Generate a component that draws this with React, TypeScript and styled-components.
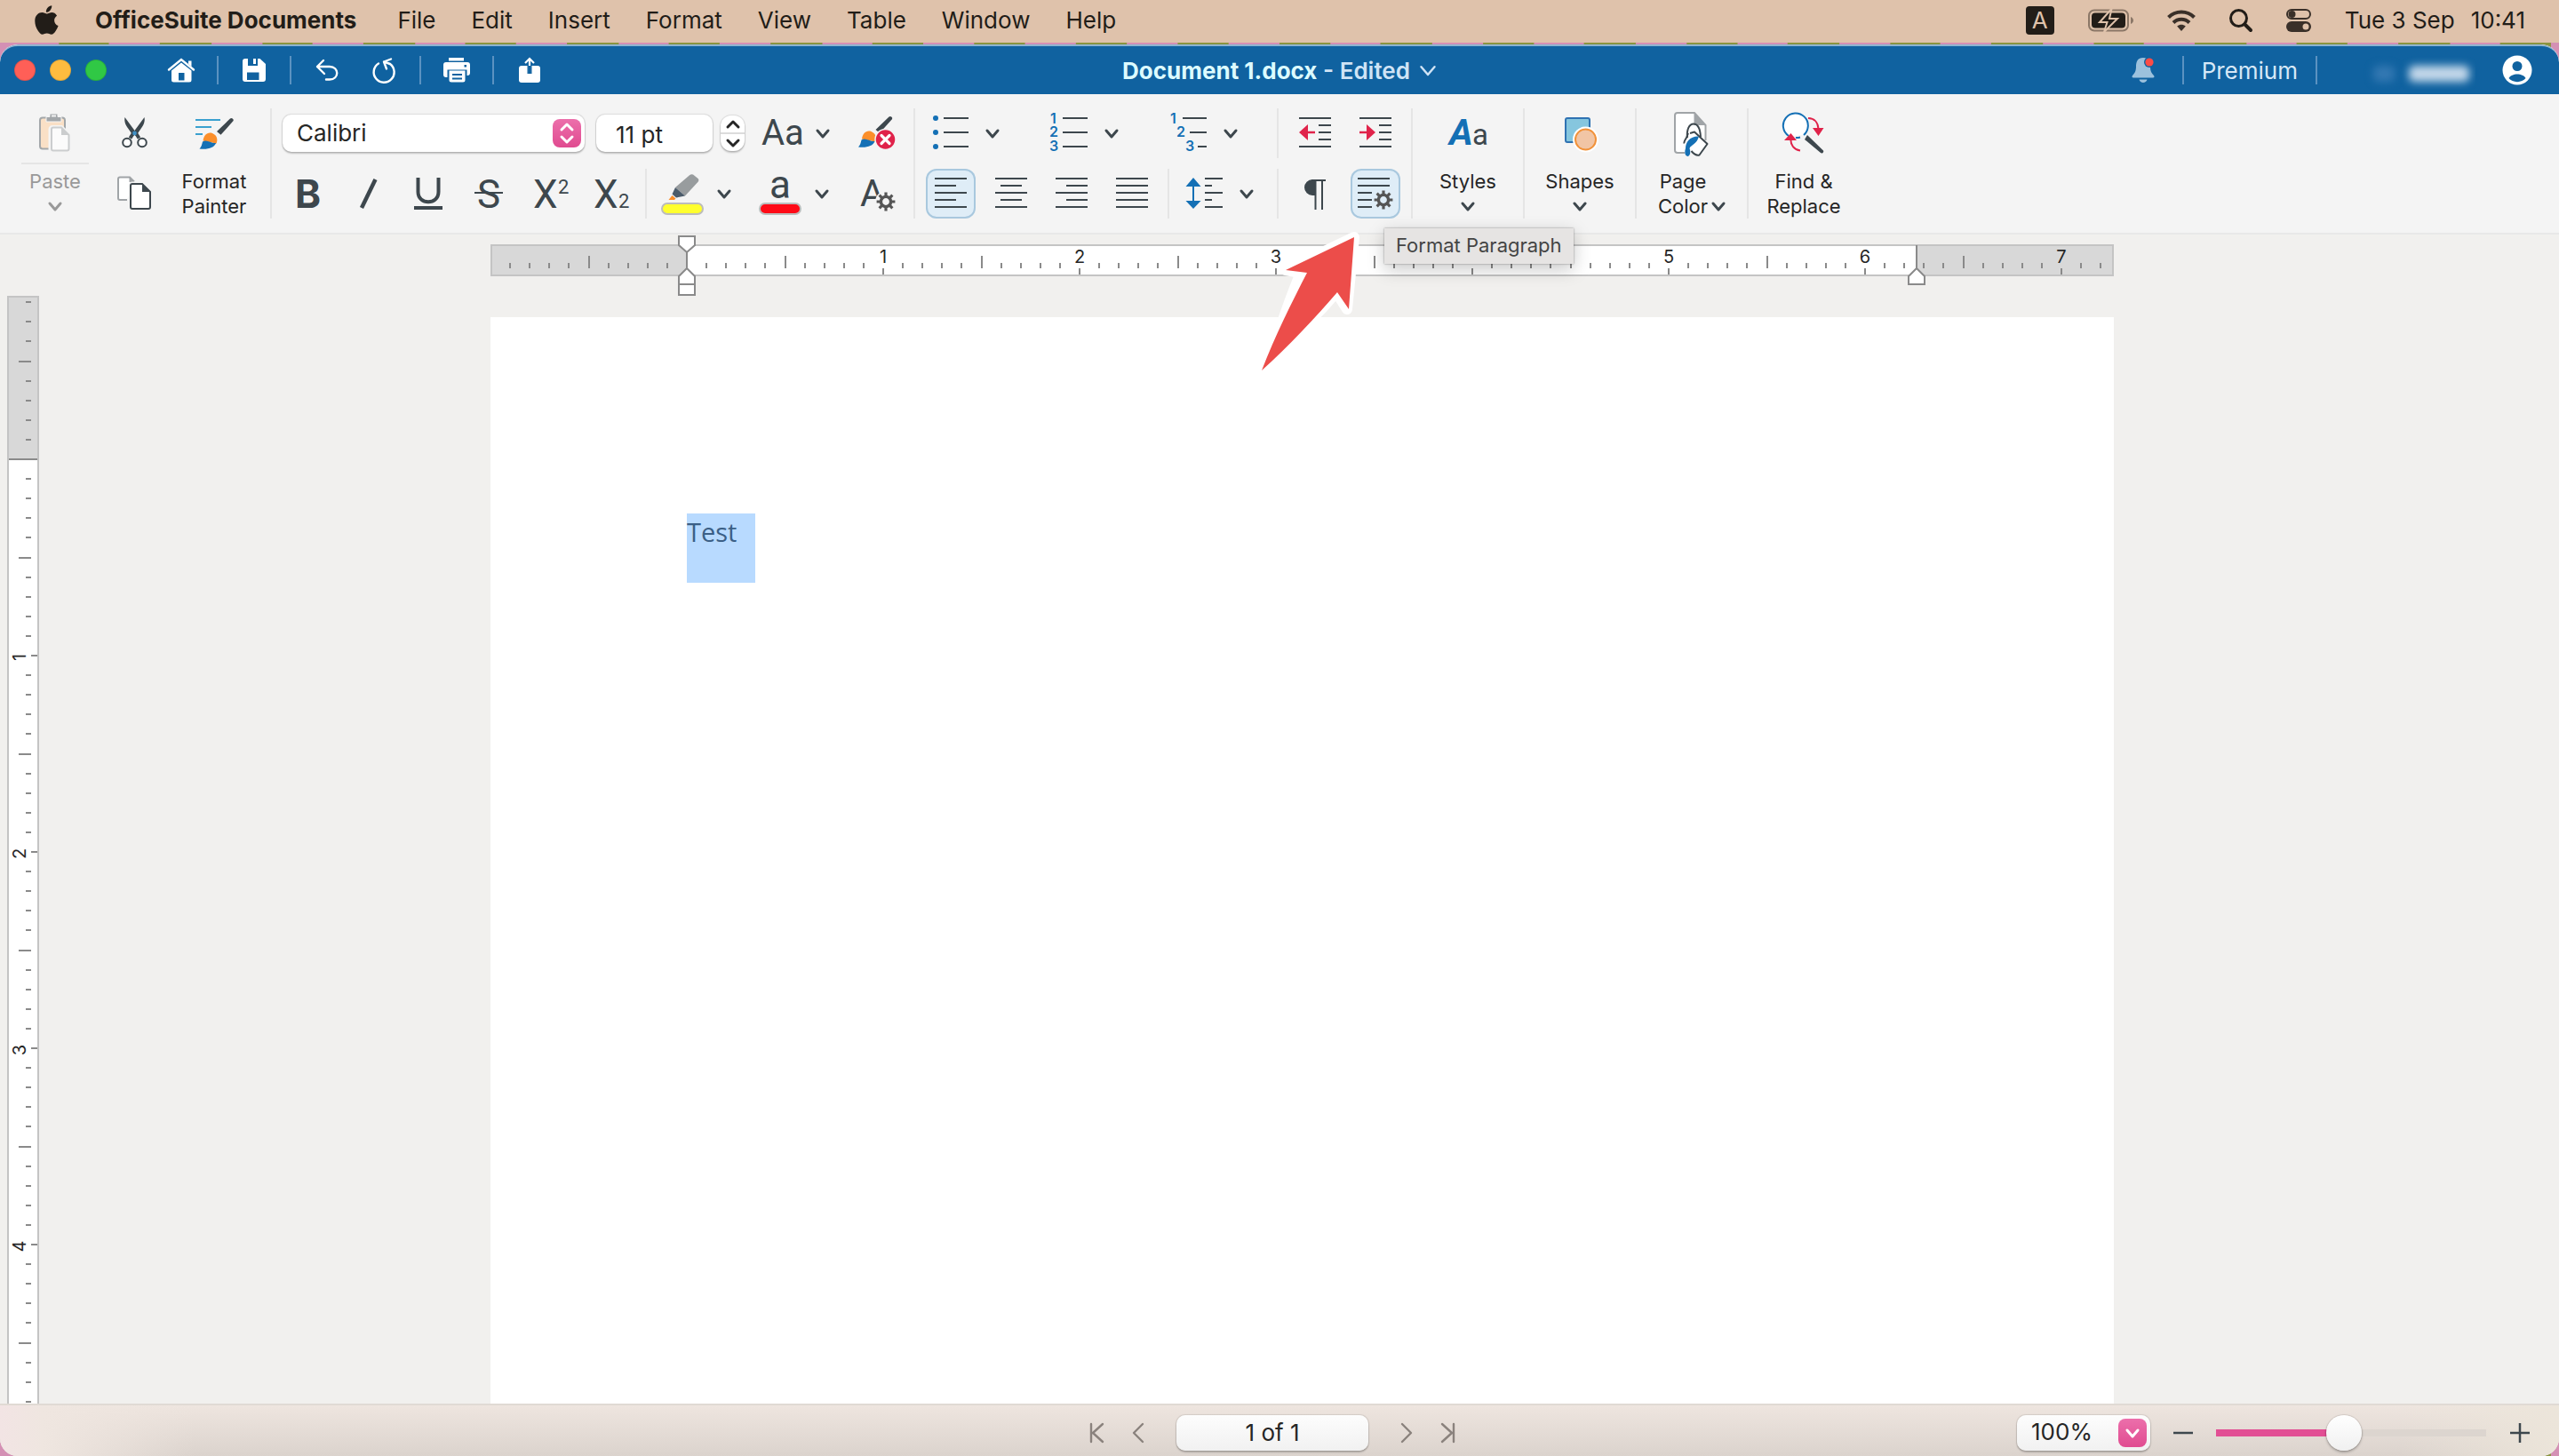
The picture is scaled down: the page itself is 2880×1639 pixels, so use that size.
import React, { useLayoutEffect, useRef, useState } from "react";
import styled, { createGlobalStyle } from "styled-components";

const INK = "#3d474d";
const BLUE = "#1470b5";
const RED = "#e0234a";
const INCH = 221;

const GlobalStyle = createGlobalStyle`
  * { box-sizing: border-box; }
  body {
    margin: 0;
    font-family: Inter, "Liberation Sans", sans-serif;
    color: #262626;
    overflow: hidden;
  }
  button, input, select { font: inherit; color: inherit; }
  svg { display: block; flex: none; overflow: visible; }
`;

/* ---------- Desktop and window ---------- */

const Desktop = styled.div`
  height: 100vh;
  display: flex;
  flex-direction: column;
  gap: 2px;
  background: repeating-linear-gradient(
    90deg,
    #d490b4 0 57px,
    #8b9440 57px 114px,
    #d490b4 114px 171px,
    #8b9440 171px 229px
  ) 9px 0;
`;

const MenuBar = styled.header`
  height: 48px;
  flex: none;
  display: flex;
  align-items: center;
  padding: 0 38px 2px 39px;
  background: #dfc2ab;
  color: #221d18;
  font-size: 26px;
  line-height: 32px;
`;

const MenuNav = styled.nav`
  display: flex;
  align-items: center;
  gap: 40px;
  margin-left: 40px;
`;

const MenuItem = styled.button<{ $strong?: boolean }>`
  padding: 0 ${(p) => (p.$strong ? 6 : 0)}px 0 0;
  border: 0;
  background: none;
  font-weight: ${(p) => (p.$strong ? 700 : 400)};
  white-space: pre;
`;

const MenuExtras = styled.div`
  display: flex;
  align-items: center;
  gap: 38px;
  margin-left: auto;
`;

const InputSource = styled.span`
  width: 32px;
  height: 32px;
  border-radius: 4px;
  background: #221d18;
  color: #dfc2ab;
  text-align: center;
`;

const Clock = styled.time`
  display: flex;
  gap: 18px;
`;

const AppWindow = styled.div`
  flex: 1;
  min-height: 0;
  display: flex;
  flex-direction: column;
  border-radius: 20px;
  overflow: hidden;
  background: #f1f0ee;
`;

/* ---------- Title bar ---------- */

const TitleBar = styled.div`
  height: 56px;
  flex: none;
  display: grid;
  grid-template-columns: 1fr auto 1fr;
  align-items: center;
  background: #1062a0;
  border-top: 2px solid #8db3cf;
  border-radius: 20px 20px 0 0;
  color: #d6e8f7;
  font-size: 26px;
`;

const BarSide = styled.div<{ $end?: boolean }>`
  display: flex;
  align-items: center;
  justify-content: ${(p) => (p.$end ? "flex-end" : "flex-start")};
`;

const Lights = styled.div`
  display: flex;
  gap: 16px;
  padding: 0 44px 0 16px;
`;

const Light = styled.button<{ $color: string }>`
  width: 24px;
  height: 24px;
  padding: 0;
  border: 1px solid rgba(0, 0, 0, 0.12);
  border-radius: 50%;
  background: ${(p) => p.$color};
`;

const BarButton = styled.button<{ $width: number }>`
  width: ${(p) => p.$width}px;
  height: 48px;
  padding: 0;
  border: 0;
  background: none;
  color: #fff;
  display: flex;
  align-items: center;
  justify-content: center;
`;

const BarDivider = styled.span`
  width: 2px;
  height: 32px;
  background: #5b92c1;
`;

const BarCluster = styled.div`
  display: flex;
  padding: 0 8px;
`;

const TitleButton = styled.button`
  display: flex;
  align-items: center;
  gap: 10px;
  padding: 0;
  border: 0;
  background: none;
  font-weight: 600;
  color: #cfe3f5;
`;

const DocName = styled.strong`
  font-weight: 700;
  color: #dcfbff;
`;

const Premium = styled.button`
  padding: 0 20px;
  border: 0;
  background: none;
`;

const BlurredName = styled.span`
  width: 178px;
  height: 44px;
  display: flex;
  align-items: center;
  justify-content: flex-end;
  gap: 16px;
  padding: 8px 7px 0 0;
  overflow: hidden;
`;

const Smudge = styled.span<{ $width: number; $color: string }>`
  width: ${(p) => p.$width}px;
  height: 18px;
  border-radius: 6px;
  background: ${(p) => p.$color};
  filter: blur(5px);
`;

/* ---------- Ribbon ---------- */

const Ribbon = styled.div`
  flex: none;
  display: flex;
  padding: 16px 0;
  background: #f4f4f4;
  border-bottom: 2px solid #e8e8e8;
  color: ${INK};
`;

const Divider = styled.span`
  width: 2px;
  height: ${(p: { $short?: boolean }) => (p.$short ? "56px" : "auto")};
  flex: none;
  background: #e5e5e5;
`;

const Rows = styled.div<{ $width: number; $pad: number }>`
  width: ${(p) => p.$width}px;
  padding-left: ${(p) => p.$pad}px;
  display: flex;
  flex-direction: column;
  gap: 12px;
`;

const Row = styled.div`
  height: 56px;
  display: flex;
  align-items: center;
`;

const Spacer = styled.span<{ $width: number }>`
  width: ${(p) => p.$width}px;
`;

const Cell = styled.div<{ $width: number }>`
  width: ${(p) => p.$width}px;
  display: flex;
  justify-content: center;
  position: relative;
`;

const ToolButton = styled.button<{ $active?: boolean }>`
  width: 56px;
  height: 56px;
  padding: 0;
  border: 0;
  border-radius: 12px;
  background: ${(p) => (p.$active ? "#dfedf7" : "none")};
  box-shadow: ${(p) => (p.$active ? "inset 0 0 0 2px #a9c8de" : "none")};
  color: inherit;
`;

const ArrowButton = styled.button`
  width: 26px;
  height: 56px;
  padding: 0;
  border: 0;
  background: none;
  display: flex;
  align-items: center;
  justify-content: center;
`;

const BigButton = styled.button<{ $width: number; $muted?: boolean }>`
  width: ${(p) => p.$width}px;
  padding: 0;
  border: 0;
  background: none;
  display: flex;
  flex-direction: column;
  align-items: center;
  gap: 12px;
  color: ${(p) => (p.$muted ? "#999" : INK)};
`;

const IconArea = styled.span<{ $ruled?: boolean }>`
  width: 76px;
  height: ${(p) => (p.$ruled ? 63 : 56)}px;
  margin-bottom: ${(p) => (p.$ruled ? -7 : 0)}px;
  display: flex;
  justify-content: center;
  border-bottom: ${(p) => (p.$ruled ? "2px solid #e5e5e5" : "0")};
`;

const Label = styled.span<{ $muted?: boolean }>`
  font-size: 22px;
  line-height: 28px;
  text-align: center;
  white-space: pre-line;
  color: ${(p) => (p.$muted ? "#999" : "#262626")};
`;

const LabelStack = styled.span`
  display: flex;
  flex-direction: column;
  align-items: center;
`;

const LabelRow = styled.span`
  display: flex;
  align-items: flex-end;
  gap: 4px;
`;

const ChevronLine = styled.span`
  height: 28px;
  display: flex;
  align-items: center;
`;

const SelectShell = styled.label<{ $width: number; $raised?: boolean }>`
  position: relative;
  width: ${(p) => p.$width}px;
  height: ${(p) => (p.$raised ? 40 : 42)}px;
  display: flex;
  border-radius: 10px;
  background: ${(p) => (p.$raised ? "linear-gradient(#fdfdfd, #f1f1f1)" : "#fff")};
  box-shadow: 0 0 1px 1px rgba(0, 0, 0, 0.1), 0 2px 2px rgba(0, 0, 0, 0.2);
  color: #262626;
  font-size: 26px;
`;

const PlainSelect = styled.select`
  appearance: none;
  width: 100%;
  border: 0;
  outline: 0;
  padding: 0 48px 2px 16px;
  background: none;
`;

const PinkKnob = styled.span`
  position: absolute;
  right: 4px;
  top: 50%;
  width: 32px;
  height: 32px;
  margin-top: -16px;
  border-radius: 8px;
  background: linear-gradient(#ec6fab, #e04b90);
  display: flex;
  align-items: center;
  justify-content: center;
  pointer-events: none;
`;

const SizeInput = styled.input`
  width: 131px;
  height: 42px;
  margin: 0 9px 0 13px;
  padding: 2px 0 0 22px;
  border: 0;
  border-radius: 10px;
  background: #fff;
  box-shadow: 0 0 1px 1px rgba(0, 0, 0, 0.1), 0 2px 2px rgba(0, 0, 0, 0.2);
  color: #262626;
  font-size: 26px;
`;

const Stepper = styled.div`
  width: 27px;
  height: 40px;
  display: flex;
  flex-direction: column;
  border-radius: 12px;
  background: #fff;
  box-shadow: 0 0 1px 1px rgba(0, 0, 0, 0.1), 0 2px 2px rgba(0, 0, 0, 0.2);
`;

const StepButton = styled.button`
  flex: 1;
  padding: 0;
  border: 0;
  background: none;
  display: flex;
  align-items: center;
  justify-content: center;
  & + & { border-top: 2px solid #dcdcdc; }
`;

const Tooltip = styled.span`
  position: absolute;
  z-index: 2;
  left: 44px;
  top: 67px;
  height: 40px;
  padding: 0 13px;
  background: #e6e4e3;
  box-shadow: 0 0 2px rgba(0, 0, 0, 0.4), 0 6px 20px rgba(0, 0, 0, 0.22);
  color: #444;
  font-size: 22px;
  line-height: 38px;
  white-space: nowrap;
`;

const Pointer = styled.svg`
  position: absolute;
  z-index: 3;
  left: -104px;
  top: 60px;
  pointer-events: none;
`;

/* ---------- Workspace ---------- */

const Workspace = styled.main`
  flex: 1;
  min-height: 0;
  display: grid;
  grid-template-columns: 51px 1fr;
  grid-template-rows: 100%;
  overflow: hidden;
`;

const SideRuler = styled.div`
  margin: 69px 7px 0 8px;
  overflow: hidden;
  background: #fff;
  border: solid #c4c4c4;
  border-width: 2px 2px 0;
`;

const Sheet = styled.div`
  width: 1827px;
  max-width: 100%;
  margin: 0 auto;
  display: flex;
  flex-direction: column;
`;

const RulerArea = styled.div`
  height: 93px;
  flex: none;
`;

const Page = styled.article`
  flex: none;
  aspect-ratio: 210 / 297;
  padding: 221px;
  background: #fff;
`;

const SelectedText = styled.p`
  display: inline-block;
  width: 77px;
  height: 78px;
  margin: 0;
  background: #b8daff;
  color: #3b5f86;
  font-family: "Open Sans", "Noto Sans", sans-serif;
  font-size: 29px;
  line-height: 42px;
`;

/* ---------- Status bar ---------- */

const StatusBar = styled.footer`
  height: 59px;
  flex: none;
  display: grid;
  grid-template-columns: 1fr auto 1fr;
  align-items: center;
  padding: 4px 16px 0 0;
  border-top: 2px solid #e0dad4;
  background: linear-gradient(90deg, #f2e4e4 0, #efe6e0 48px, rgba(239, 230, 224, 0) 220px),
    linear-gradient(270deg, #ece5da 0, rgba(236, 229, 218, 0) 180px),
    linear-gradient(#eee5df, #dbd3cd);
  color: ${INK};
`;

const Pager = styled.div`
  grid-column: 2;
  display: flex;
  align-items: center;
`;

const PagerButton = styled.button`
  width: 46px;
  height: 40px;
  padding: 0;
  border: 0;
  background: none;
  display: flex;
  align-items: center;
  justify-content: center;
`;

const PageBox = styled.input`
  width: 216px;
  height: 40px;
  margin: 0 20px;
  padding: 0;
  border: 0;
  border-radius: 10px;
  background: linear-gradient(#fdfdfd, #f1f1f1);
  box-shadow: 0 0 1px 1px rgba(0, 0, 0, 0.1), 0 2px 2px rgba(0, 0, 0, 0.2);
  color: #262626;
  font-size: 26px;
  text-align: center;
`;

const ZoomArea = styled.div`
  display: flex;
  align-items: center;
  justify-content: flex-end;
`;

const ZoomButton = styled.button`
  width: 56px;
  height: 40px;
  padding: 0;
  border: 0;
  background: none;
  display: flex;
  align-items: center;
  justify-content: center;
`;

const ZoomSlider = styled.input`
  appearance: none;
  width: 304px;
  height: 40px;
  margin: 0 10px 0 9px;
  background: linear-gradient(90deg, #e24e94 48%, #dcd5cf 48%) center / 100% 8px no-repeat;
  &::-webkit-slider-runnable-track { height: 40px; }
  &::-webkit-slider-thumb {
    appearance: none;
    width: 40px;
    height: 40px;
    border-radius: 50%;
    background: linear-gradient(#fff, #f0f0f0);
    box-shadow: 0 0 1px 1px rgba(0, 0, 0, 0.1), 0 2px 3px rgba(0, 0, 0, 0.25);
  }
`;

/* ---------- Icons ---------- */

const Icon = ({ children }: { children: React.ReactNode }) => (
  <svg width="56" height="56" viewBox="0 0 56 56" fill="none" stroke={INK} strokeWidth="2" aria-hidden="true">
    {children}
  </svg>
);

const Chevron = ({ color = INK, size = 16, weight = 3 }: { color?: string; size?: number; weight?: number }) => (
  <svg width={size} height={size} viewBox="0 0 16 16" fill="none" stroke={color} strokeWidth={weight} strokeLinecap="round" strokeLinejoin="round">
    <path d="M2 5l6 7 6-7" />
  </svg>
);

const Gear = ({ x, y }: { x: number; y: number }) => (
  <g transform={`translate(${x} ${y})`} stroke="#555" fill="none">
    <circle r="5.6" strokeWidth="3.4" />
    {[0, 45, 90, 135, 180, 225, 270, 315].map((a) => (
      <path key={a} d="M0 -6V-10.4" strokeWidth="3.2" transform={`rotate(${a})`} />
    ))}
  </g>
);

const Glyph = ({ x, y, size, weight = 400, italic, fill = INK, family = "Roboto", children }: {
  x: number; y: number; size: number; weight?: number; italic?: boolean; fill?: string; family?: string; children: string;
}) => (
  <text x={x} y={y} fontSize={size} fontWeight={weight} fontStyle={italic ? "italic" : "normal"} fontFamily={`${family}, sans-serif`} fill={fill} stroke="none">
    {children}
  </text>
);

const Lines = ({ spans }: { spans: [number, number, number][] }) => (
  <path d={spans.map(([y, a, b]) => `M${a} ${y}H${b}`).join("")} />
);

const PasteIcon = () => (
  <Icon>
    <rect x="11" y="10.500" width="28" height="35" rx="3" fill="#fae0c6" stroke="#a3a7aa" />
    <path d="M18 15V9.500H22V6H31V9.500H35V15Z" fill="#a3a7aa" stroke="#f4f4f4" strokeWidth="1" />
    <path d="M24 8.500H29" stroke="#f4f4f4" />
    <path d="M23 23.500a2 2 0 0 1 2-2H35l8.500 8.500V46a2 2 0 0 1-2 2H25a2 2 0 0 1-2-2Z" fill="#fafafa" stroke="#f4f4f4" strokeWidth="5" />
    <path d="M24 23.500a2 2 0 0 1 2-2H35l8.500 8.500V45.500a2 2 0 0 1-2 2H26a2 2 0 0 1-2-2Z" fill="#fbfbfb" stroke="#cbcdce" />
    <path d="M35 21.500V30H43.500Z" fill="#cbcdce" stroke="none" />
  </Icon>
);

const CutIcon = () => (
  <Icon>
    <path d="M17.500 10c-1 5 1 9 4 13l5.500 8 3-4Z" fill={INK} stroke="none" />
    <path d="M39.500 10c1 5-1 9-4 13l-5.500 8-3-4Z" fill={INK} stroke="none" />
    <path d="M27 28L23.500 33.500M30 28L33.500 33.500" strokeWidth="4" />
    <circle cx="28.500" cy="28" r="2.400" fill="#3f8fc4" stroke="none" />
    <circle cx="20" cy="38.500" r="4.800" fill="#fff" />
    <circle cx="37" cy="38.500" r="4.800" fill="#fff" />
  </Icon>
);

const CopyIcon = () => (
  <Icon>
    <path d="M20 35H12a2 2 0 0 1-2-2V11.500a2 2 0 0 1 2-2H23l5 5" fill="#fff" stroke="#a0a4a7" />
    <path d="M22.500 9V15H28.500Z" fill="#a0a4a7" stroke="none" />
    <path d="M24 19a2 2 0 0 1 2-2H37l9 9V43a2 2 0 0 1-2 2H26a2 2 0 0 1-2-2Z" fill="#fff" stroke="#f4f4f4" strokeWidth="5" />
    <path d="M24 19a2 2 0 0 1 2-2H37l9 9V43a2 2 0 0 1-2 2H26a2 2 0 0 1-2-2Z" fill="#fff" />
    <path d="M37 17V26H46Z" fill={INK} stroke="none" />
  </Icon>
);

const Brush = () => (
  <g stroke="none">
    <path d="M46 11.500L31 26l4.500 3.800L49.600 14a2.300 2.300 0 0 0-3.600-2.500Z" fill={INK} />
    <path d="M15.500 36.500c.5-6 5-10.500 10.500-8.500 5 2 6.500 7 4.500 11.500Z" fill="#fb8f2b" />
    <path d="M15 37.500c5-3 10 2.500 15.200 1.500-2.500 5.500-9 7.500-18.700 6.500 2.200-2 2.700-5 3.500-8Z" fill={BLUE} />
  </g>
);

const PainterIcon = () => (
  <Icon>
    <path d="M7 13H35M7 21H25M7 29H15" stroke="#3aa0cf" />
    <Brush />
  </Icon>
);

const ClearIcon = () => (
  <Icon>
    <g transform="translate(-3.500 -2)"><Brush /></g>
    <circle cx="38.500" cy="35" r="11.500" fill={RED} stroke="#f4f4f4" strokeWidth="1.500" />
    <path d="M34 30.500l9 9M43 30.500l-9 9" stroke="#fff" strokeWidth="3.200" strokeLinecap="round" />
  </Icon>
);

const HighlightIcon = () => (
  <Icon>
    <path d="M20 21L36 7.200a4 4 0 0 1 4-.6l5 4a3 3 0 0 1 .8 4L31 30.500Z" fill="#989c9e" stroke="none" />
    <path d="M20 21L31 30.500 21 32.500 16.500 28.500Z" fill="#4c5c6b" stroke="none" />
    <path d="M16.500 30l4 3.500-1.500 1.500H12.500Z" fill="#fb8f2b" stroke="none" />
    <rect x="5" y="39" width="46" height="12" rx="6" fill="#ffff2e" stroke="#bcbcbc" />
  </Icon>
);

const FontColorIcon = () => (
  <Icon>
    <Glyph x={16} y={33} size={44}>a</Glyph>
    <rect x="5" y="39" width="46" height="12" rx="6" fill="#ff0a16" stroke="#bcbcbc" />
  </Icon>
);

const FontGearIcon = () => (
  <Icon>
    <Glyph x={8} y={42} size={42}>A</Glyph>
    <circle cx="37" cy="37" r="12" fill="#f4f4f4" stroke="none" />
    <Gear x={37} y={37} />
  </Icon>
);

const BulletIcon = () => (
  <Icon>
    <g fill={BLUE} stroke="none"><circle cx="11" cy="11" r="3" /><circle cx="11" cy="27" r="3" /><circle cx="11" cy="43" r="3" /></g>
    <Lines spans={[[11, 20, 48], [27, 20, 48], [43, 20, 48]]} />
  </Icon>
);

const NumberIcon = () => (
  <Icon>
    <Glyph x={6} y={17} size={16} weight={600} fill={BLUE} family="Inter">1</Glyph>
    <Glyph x={5} y={32} size={16} weight={600} fill={BLUE} family="Inter">2</Glyph>
    <Glyph x={5} y={48} size={16} weight={600} fill={BLUE} family="Inter">3</Glyph>
    <Lines spans={[[11, 20, 48], [27, 20, 48], [43, 20, 48]]} />
  </Icon>
);

const MultiIcon = () => (
  <Icon>
    <Glyph x={7} y={17} size={16} weight={600} fill={BLUE} family="Inter">1</Glyph>
    <Glyph x={14} y={32} size={16} weight={600} fill={BLUE} family="Inter">2</Glyph>
    <Glyph x={24} y={48} size={16} weight={600} fill={BLUE} family="Inter">3</Glyph>
    <Lines spans={[[11, 21, 48], [27, 29, 48], [43, 38, 48]]} />
  </Icon>
);

const AlignIcon = ({ from, to }: { from: number; to: number }) => (
  <Icon>
    <Lines spans={[[11, 10, 46], [19, from, to], [27, 10, 46], [35, from, to], [43, 10, 46]]} />
  </Icon>
);

const SpacingIcon = () => (
  <Icon>
    <path d="M15 16V39" stroke={BLUE} />
    <path d="M15 10l8.500 10h-17ZM15 45l8.500-9h-17Z" fill={BLUE} stroke="none" />
    <Lines spans={[[11, 28, 48], [19, 28, 36], [27, 28, 48], [35, 28, 36], [43, 28, 48]]} />
  </Icon>
);

const IndentIcon = ({ out }: { out?: boolean }) => (
  <Icon>
    <Lines spans={[[11, 10, 46], [19, 32, 46], [27, 32, 46], [35, 32, 46], [43, 10, 46]]} />
    <path d={out ? "M18 27H28" : "M10 27H20"} stroke={RED} strokeWidth="2.500" />
    <path d={out ? "M10 27L20 18V36Z" : "M28 27L18 18V36Z"} fill={RED} stroke="none" />
  </Icon>
);

const PilcrowIcon = () => (
  <Icon>
    <path d="M29 12H25a9 9 0 0 0 0 18h3Z" fill={INK} stroke="none" />
    <path d="M24 13H40M28.500 13V46M36 13V46" />
  </Icon>
);

const ParagraphIcon = () => (
  <Icon>
    <Lines spans={[[11, 8, 44], [19, 8, 44], [27, 8, 24], [35, 8, 24], [43, 8, 24]]} />
    <Gear x={37} y={35} />
  </Icon>
);

const StylesIcon = () => (
  <Icon>
    <Glyph x={7} y={41} size={41} weight={700} italic fill={BLUE}>A</Glyph>
    <Glyph x={33} y={41} size={33}>a</Glyph>
  </Icon>
);

const ShapesIcon = () => (
  <Icon>
    <rect x="12" y="11" width="27" height="27" rx="2" fill="#86c6de" stroke="#2f72b2" />
    <circle cx="34.500" cy="35" r="13" fill="#f1c5a5" stroke="#fff" strokeWidth="3" />
    <circle cx="34.500" cy="35" r="11.500" fill="#f1c5a5" stroke="#f1923a" />
  </Icon>
);

const PageColorIcon = () => (
  <Icon>
    <path d="M20 50H12a3 3 0 0 1-3-3V8a3 3 0 0 1 3-3H31L43.500 19V36" fill="#fff" stroke="#a0a4a7" />
    <path d="M30.500 5V19H44Z" fill="#a0a4a7" stroke="none" />
    <path d="M25 29L44.500 41.500 37 52 30 49" fill="#fff" stroke="none" />
    <path d="M24 28L22 33C20 36 19 38 19.500 39.500M26 28L31 26.500 45.500 40 36.500 52.500C33 53.500 30 51 27.500 48" fill="#fff" strokeLinejoin="round" />
    <path d="M23 33C22 24 25 17.500 30 17.500S37.500 24 38 32" />
    <path d="M36 31.500C34 40 27 41 25.500 45c1 3 1.500 8-2 9-4-.5-3.500-6-2.500-9 0-7 5-14 15-13.500Z" fill={BLUE} stroke="none" />
  </Icon>
);

const FindIcon = () => (
  <Icon>
    <path d="M11 31A14 14 0 1 1 28 30" fill="#fff" stroke={BLUE} />
    <path d="M24 32.500A14 14 0 0 1 19 33" stroke={BLUE} />
    <path d="M32 30L50 47.500a2 2 0 0 1-3 2.500L29 35Z" fill={INK} stroke="none" />
    <path d="M33 11C40 11 44 16 44.500 23M24 47.500C17 46.500 13 41 13.500 35" stroke={RED} />
    <path d="M38 22H50.500L44.500 31ZM6 36H20L13.500 28Z" fill={RED} stroke="none" />
  </Icon>
);

const AppleLogo = () => (
  <svg width="28" height="34" viewBox="0 0 25 31" fill="#221d18">
    <path d="M17.300 0.300c.2 1.800-.5 3.500-1.500 4.700-1 1.300-2.700 2.200-4.300 2.100-.2-1.700.6-3.500 1.500-4.600 1.100-1.300 2.900-2.200 4.300-2.200ZM22.600 10.600c-1.500 1-2.700 2.600-2.700 4.900 0 2.700 1.700 4.700 4.100 5.500-.6 1.900-1.600 3.700-2.800 5.400-1.200 1.700-2.400 3.500-4.300 3.500-1.900 0-2.400-1.100-4.600-1.100-2.200 0-2.900 1.100-4.600 1.100-1.800 0-3.100-1.700-4.300-3.400C1.200 23.400 0 19.500 0 16c0-5.800 3.800-8.700 7.400-8.700 2 0 3.600 1.300 4.900 1.300 1.200 0 3-1.400 5.300-1.400 1.600 0 3.700.8 5 3.400Z" />
  </svg>
);

/* ---------- Rulers ---------- */

const ticks = (from: number, to: number) => {
  const list: number[] = [];
  for (let i = from; i <= to; i += 1) list.push(i);
  return list.filter((i) => i !== 0);
};

const at = (tenths: number) => Math.round((tenths * INCH) / 10);

const TopRuler = ({ labels }: { labels: number[] }) => (
  <svg width="1827" height="72" viewBox="0 0 1827 72" fill="none">
    <rect x="1" y="12" width="1825" height="34" fill="#fff" stroke="#c4c4c4" strokeWidth="2" />
    <path d="M2 13H221V45H2ZM1605 13H1825V45H1605Z" fill="#d8d8d8" />
    {ticks(-9, 72).map((i) => {
      const x = INCH + at(i);
      return (
        <path
          key={i}
          d={i % 10 === 0 ? `M${x} 38V45` : i % 5 === 0 ? `M${x} 24V38` : `M${x} 32V38`}
          stroke="#8a8a8a"
          strokeWidth="2"
        />
      );
    })}
    {labels.map((n) => (
      <text key={n} x={INCH + n * INCH} y="32" fontSize="20" textAnchor="middle" fill="#262626">{n}</text>
    ))}
    <g stroke="#8a8a8a" strokeWidth="2" fill="#fff">
      <path d="M221 20V38M1605 12V38" />
      <path d="M212 2H230V12L221 20 212 12Z" />
      <path d="M221 38L230 47V56H212V47ZM212 56H230V68H212Z" />
      <path d="M1605 38L1614 47V56H1596V47Z" />
    </g>
  </svg>
);

const LeftRuler = () => {
  const box = useRef<HTMLDivElement>(null);
  const [height, setHeight] = useState(0);

  useLayoutEffect(() => {
    const node = box.current;
    if (!node) return undefined;
    const measure = () => setHeight(node.clientHeight);
    measure();
    window.addEventListener("resize", measure);
    return () => window.removeEventListener("resize", measure);
  }, []);

  const last = Math.floor(((height - 182) * 10) / INCH);

  return (
    <SideRuler ref={box}>
      <svg width="32" height={height} fill="none">
        <path d="M0 0H32V181H0Z" fill="#d8d8d8" />
        <path d="M0 182H32" stroke="#8a8a8a" strokeWidth="2" />
        {ticks(-8, last).map((i) => {
          const y = 182 + at(i);
          return (
            <g key={i}>
              <path d={i % 10 === 0 ? `M25 ${y}H32` : i % 5 === 0 ? `M11 ${y}H25` : `M19 ${y}H25`} stroke="#8a8a8a" strokeWidth="2" />
              {i > 0 && i % 10 === 0 && (
                <text transform={`translate(19 ${y + 2}) rotate(-90)`} fontSize="20" textAnchor="middle" fill="#262626">{i / 10}</text>
              )}
            </g>
          );
        })}
      </svg>
    </SideRuler>
  );
};

/* ---------- Sections ---------- */

const Tool = ({ label, width = 68, active, children, overlay }: {
  label: string; width?: number; active?: boolean; children: React.ReactNode; overlay?: React.ReactNode;
}) => (
  <Cell $width={width}>
    <ToolButton aria-label={label} $active={active}>{children}</ToolButton>
    {overlay}
  </Cell>
);

const More = ({ label }: { label: string }) => (
  <ArrowButton aria-label={label}><Chevron /></ArrowButton>
);

const SystemMenu = () => (
  <MenuBar>
    <AppleLogo />
    <MenuNav>
      <MenuItem $strong>OfficeSuite Documents</MenuItem>
      {["File", "Edit", "Insert", "Format", "View", "Table", "Window", "Help"].map((name) => (
        <MenuItem key={name}>{name}</MenuItem>
      ))}
    </MenuNav>
    <MenuExtras>
      <InputSource>A</InputSource>
      <svg width="51" height="26" viewBox="0 0 51 26" fill="none">
        <rect x="1" y="1.500" width="44" height="23" rx="6" stroke="#8b7767" strokeWidth="2" />
        <path d="M48 9v8c4-1.500 4-6.500 0-8Z" fill="#8b7767" />
        <rect x="4" y="4.500" width="38" height="17" rx="4" fill="#221d18" />
        <path d="M26.500 0L13 15h8.500L18 26 33 11h-9Z" fill="#221d18" stroke="#dfc2ab" strokeWidth="2" />
      </svg>
      <svg width="32" height="24" viewBox="0 0 32 24" fill="none" stroke="#3a3029" strokeWidth="4">
        <path d="M1.500 8.500C9.500.5 22.500.5 30.500 8.500M7 14.500c5-5 13-5 18 0" />
        <path d="M16 24l-4.800-5.500c3-2.300 6.600-2.300 9.600 0Z" fill="#3a3029" stroke="none" />
      </svg>
      <svg width="26" height="26" viewBox="0 0 26 26" fill="none" stroke="#221d18" strokeWidth="3" strokeLinecap="round">
        <circle cx="10.500" cy="10.500" r="9" /><path d="M17.500 17.500L24 24" strokeWidth="4" />
      </svg>
      <svg width="28" height="26" viewBox="0 0 28 26" fill="none" stroke="#3a3029" strokeWidth="2">
        <rect x="1" y="1" width="26" height="10" rx="5" /><circle cx="6.500" cy="6" r="3" fill="#3a3029" />
        <rect x="0" y="14" width="28" height="12" rx="6" fill="#3a3029" stroke="none" />
        <circle cx="22" cy="20" r="3.500" fill="#dfc2ab" stroke="none" />
      </svg>
      <Clock><span>Tue 3 Sep</span><span>10:41</span></Clock>
    </MenuExtras>
  </MenuBar>
);

const DocumentTitleBar = () => (
  <TitleBar>
    <BarSide>
      <Lights>
        <Light $color="#ff5f57" aria-label="Close" />
        <Light $color="#febc3f" aria-label="Minimize" />
        <Light $color="#30c845" aria-label="Zoom" />
      </Lights>
      <BarButton $width={80} aria-label="Home">
        <svg width="30" height="28" viewBox="0 0 30 28" fill="currentColor">
          <path d="M1 13.500L15 2l14 11.500" fill="none" stroke="currentColor" strokeWidth="2.400" strokeLinecap="round" />
          <path d="M23 3.500h3.500V10L23 7ZM4 14.500L15 5.500l11.500 9V25a2.500 2.500 0 0 1-2.500 2.500H6.500A2.500 2.500 0 0 1 4 25ZM12 17v8.500h6.500V17Z" fillRule="evenodd" />
        </svg>
      </BarButton>
      <BarDivider />
      <BarButton $width={80} aria-label="Save">
        <svg width="26" height="26" viewBox="0 0 26 26" fill="currentColor">
          <path d="M3 0h3v8h11V0h2.500L26 6v17a3 3 0 0 1-3 3H3a3 3 0 0 1-3-3V3a3 3 0 0 1 3-3Zm2 15.500V24h13.500v-8.500ZM12 0h3v6h-3Z" fillRule="evenodd" />
        </svg>
      </BarButton>
      <BarDivider />
      <BarCluster>
        <BarButton $width={64} aria-label="Undo">
          <svg width="26" height="26" viewBox="0 0 26 26" fill="none" stroke="currentColor" strokeWidth="2.400" strokeLinecap="round" strokeLinejoin="round">
            <path d="M9 2L2 9l8 8M2 9h14c11 0 11 14.500 0 14.500H12" />
          </svg>
        </BarButton>
        <BarButton $width={64} aria-label="Redo">
          <svg width="28" height="28" viewBox="0 0 28 28" fill="none" stroke="currentColor" strokeWidth="2.400" strokeLinecap="round" strokeLinejoin="round">
            <path d="M8 6.500A11.500 11.500 0 1 0 21 7L14 4.500M22 1.500L14 4.500l3 8" />
          </svg>
        </BarButton>
      </BarCluster>
      <BarDivider />
      <BarButton $width={80} aria-label="Print">
        <svg width="30" height="28" viewBox="0 0 30 28" fill="currentColor">
          <path d="M6 0h17v3.500H6Z" />
          <path d="M3 5h24a3 3 0 0 1 3 3v9a3 3 0 0 1-3 3h-.5v-6.500h-22V22H3a3 3 0 0 1-3-3V8a3 3 0 0 1 3-3Zm20.500 3v2.500H26V8Z" fillRule="evenodd" />
          <path d="M6.500 14.500h18V25a2.500 2.500 0 0 1-2.500 2.500H9A2.500 2.500 0 0 1 6.500 25ZM10 18v2h11v-2Zm0 4.500v2h11v-2Z" fillRule="evenodd" />
        </svg>
      </BarButton>
      <BarDivider />
      <BarButton $width={80} aria-label="Share">
        <svg width="24" height="30" viewBox="0 0 24 30" fill="currentColor">
          <rect x="0" y="10" width="24" height="19" rx="3" />
          <path d="M12 19V2M7 7l5-5 5 5" fill="none" stroke="#1062a0" strokeWidth="5" />
          <path d="M12 19V2M7 7l5-5 5 5" fill="none" stroke="currentColor" strokeWidth="2.200" />
          <path d="M12 10v9" stroke="#1062a0" strokeWidth="2.500" />
        </svg>
      </BarButton>
    </BarSide>
    <TitleButton>
      <span><DocName>Document 1.docx</DocName> - Edited</span>
      <Chevron color="#cfe3f5" size={20} weight={2} />
    </TitleButton>
    <BarSide $end>
      <BarButton $width={88} aria-label="Notifications">
        <svg width="26" height="28" viewBox="0 0 26 28" fill="#9cc1dd">
          <path d="M13 0c6 0 8 4 8 10 0 5 1.500 7.500 4 10 1 1.500.5 2.500-1 2.500H2c-1.500 0-2-1-1-2.500 2.500-2.500 4-5 4-10C5 4 7 0 13 0ZM8.500 24.500h9c-1 4.500-8 4.500-9 0Z" />
          <circle cx="20" cy="5" r="6" fill="#1062a0" /><circle cx="20" cy="5" r="4.600" fill="#fd4b46" />
        </svg>
      </BarButton>
      <BarDivider />
      <Premium>Premium</Premium>
      <BarDivider />
      <BlurredName>
        <Smudge $width={24} $color="#3378b2" />
        <Smudge $width={68} $color="#c4d8ea" />
      </BlurredName>
      <BarButton $width={94} aria-label="Account">
        <svg width="34" height="34" viewBox="0 0 34 34">
          <circle cx="17" cy="17" r="16.500" fill="#fff" />
          <circle cx="17" cy="12.500" r="5.500" fill="#1062a0" />
          <path d="M7.500 26c3-6 16-6 19 0-4 5.500-15 5.500-19 0Z" fill="#1062a0" />
        </svg>
      </BarButton>
    </BarSide>
  </TitleBar>
);

const FormattingRibbon = () => (
  <Ribbon>
    <BigButton $width={124} $muted>
      <IconArea $ruled><PasteIcon /></IconArea>
      <LabelStack>
        <Label $muted>Paste</Label>
        <ChevronLine><Chevron color="#999" /></ChevronLine>
      </LabelStack>
    </BigButton>
    <Rows $width={54} $pad={0}>
      <Row><Tool label="Cut" width={54}><CutIcon /></Tool></Row>
      <Row><Tool label="Copy" width={54}><CopyIcon /></Tool></Row>
    </Rows>
    <BigButton $width={126}>
      <IconArea><PainterIcon /></IconArea>
      <Label>{"Format\nPainter"}</Label>
    </BigButton>
    <Divider />

    <Rows $width={722} $pad={7}>
      <Row>
        <Spacer $width={5} />
        <SelectShell $width={340}>
          <PlainSelect aria-label="Font" defaultValue="Calibri"><option>Calibri</option></PlainSelect>
          <PinkKnob>
            <svg width="18" height="26" viewBox="0 0 18 26" fill="none" stroke="#fff" strokeWidth="3" strokeLinecap="round" strokeLinejoin="round">
              <path d="M3 9l6-6 6 6M3 17l6 6 6-6" />
            </svg>
          </PinkKnob>
        </SelectShell>
        <SizeInput aria-label="Font size" defaultValue="11 pt" />
        <Stepper>
          <StepButton aria-label="Increase size">
            <svg width="16" height="10" viewBox="0 0 16 10" fill="none" stroke="#262626" strokeWidth="3" strokeLinecap="round" strokeLinejoin="round"><path d="M2 8l6-6 6 6" /></svg>
          </StepButton>
          <StepButton aria-label="Decrease size">
            <svg width="16" height="10" viewBox="0 0 16 10" fill="none" stroke="#262626" strokeWidth="3" strokeLinecap="round" strokeLinejoin="round"><path d="M2 2l6 6 6-6" /></svg>
          </StepButton>
        </Stepper>
        <Spacer $width={7} />
        <Tool label="Change case"><Icon><Glyph x={6} y={41} size={40}>Aa</Glyph></Icon></Tool>
        <More label="Case options" />
        <Spacer $width={13} />
        <Tool label="Clear formatting"><ClearIcon /></Tool>
      </Row>
      <Row>
        <Tool label="Bold"><Icon><Glyph x={13} y={44} size={44} weight={700} family="Inter">B</Glyph></Icon></Tool>
        <Tool label="Italic"><Icon><path d="M35.500 12L20 44" strokeWidth="4.500" /></Icon></Tool>
        <Tool label="Underline"><Icon><path d="M15.500 10V26c0 15 23 15 23 0V10" strokeWidth="4" /><path d="M11 44H43" strokeWidth="4" /></Icon></Tool>
        <Tool label="Strikethrough"><Icon><Glyph x={14} y={44} size={44}>S</Glyph><path d="M11 27H43" /></Icon></Tool>
        <Tool label="Superscript"><Icon><Glyph x={9} y={44} size={44}>X</Glyph><Glyph x={37} y={28} size={22}>2</Glyph></Icon></Tool>
        <Tool label="Subscript"><Icon><Glyph x={9} y={44} size={44}>X</Glyph><Glyph x={37} y={44} size={22}>2</Glyph></Icon></Tool>
        <Spacer $width={5} />
        <Divider $short />
        <Spacer $width={6} />
        <Tool label="Highlight color"><HighlightIcon /></Tool>
        <More label="Highlight options" />
        <Spacer $width={16} />
        <Tool label="Font color"><FontColorIcon /></Tool>
        <More label="Font color options" />
        <Spacer $width={16} />
        <Tool label="Format font"><FontGearIcon /></Tool>
      </Row>
    </Rows>
    <Divider />

    <Rows $width={407} $pad={6}>
      <Row>
        <Tool label="Bullets"><BulletIcon /></Tool><More label="Bullet options" />
        <Spacer $width={40} />
        <Tool label="Numbering"><NumberIcon /></Tool><More label="Numbering options" />
        <Spacer $width={40} />
        <Tool label="Multilevel list"><MultiIcon /></Tool><More label="Multilevel options" />
      </Row>
      <Row>
        <Tool label="Align left" active><AlignIcon from={10} to={34} /></Tool>
        <Tool label="Center"><AlignIcon from={16} to={40} /></Tool>
        <Tool label="Align right"><AlignIcon from={22} to={46} /></Tool>
        <Tool label="Justify"><AlignIcon from={10} to={46} /></Tool>
        <Spacer $width={6} />
        <Divider $short />
        <Spacer $width={6} />
        <Tool label="Line spacing"><SpacingIcon /></Tool><More label="Line spacing options" />
      </Row>
    </Rows>

    <Rows $width={151} $pad={0}>
      <Row>
        <Divider $short />
        <Spacer $width={7} />
        <Tool label="Decrease indent"><IndentIcon out /></Tool>
        <Tool label="Increase indent"><IndentIcon /></Tool>
      </Row>
      <Row>
        <Divider $short />
        <Spacer $width={7} />
        <Tool label="Show formatting marks"><PilcrowIcon /></Tool>
        <Tool
          label="Format Paragraph"
          active
          overlay={
            <>
              <Tooltip role="tooltip">Format Paragraph</Tooltip>
              <Pointer width="140" height="180" viewBox="0 0 140 180">
                <path d="M22 146C32 115 42 85 54 57L37 54 114 17 106 98 94 79C76 101 50 126 22 146Z" fill="#fff" stroke="#fff" strokeWidth="12" strokeLinejoin="round" />
                <path d="M10 167C25 128 44 90 61 57L37 54 114 17 108 98 95 79C70 108 40 140 10 167Z" fill="#ec4d4a" />
              </Pointer>
            </>
          }
        >
          <ParagraphIcon />
        </Tool>
      </Row>
    </Rows>
    <Divider />

    <BigButton $width={124}>
      <IconArea><StylesIcon /></IconArea>
      <LabelStack><Label>Styles</Label><ChevronLine><Chevron /></ChevronLine></LabelStack>
    </BigButton>
    <Divider />
    <BigButton $width={124}>
      <IconArea><ShapesIcon /></IconArea>
      <LabelStack><Label>Shapes</Label><ChevronLine><Chevron /></ChevronLine></LabelStack>
    </BigButton>
    <Divider />
    <BigButton $width={124}>
      <IconArea><PageColorIcon /></IconArea>
      <LabelRow><Label>{"Page\nColor"}</Label><ChevronLine><Chevron /></ChevronLine></LabelRow>
    </BigButton>
    <Divider />
    <BigButton $width={124}>
      <IconArea><FindIcon /></IconArea>
      <Label>{"Find &\nReplace"}</Label>
    </BigButton>
  </Ribbon>
);

const PagerGlyph = ({ d }: { d: string }) => (
  <svg width="18" height="24" viewBox="0 0 18 24" fill="none" stroke="#8a827d" strokeWidth="2.400" strokeLinecap="round" strokeLinejoin="round">
    <path d={d} />
  </svg>
);

export default function App() {
  return (
    <>
      <GlobalStyle />
      <Desktop>
        <SystemMenu />
        <AppWindow>
          <DocumentTitleBar />
          <FormattingRibbon />
          <Workspace>
            <LeftRuler />
            <Sheet>
              <RulerArea><TopRuler labels={[1, 2, 3, 5, 6, 7]} /></RulerArea>
              <Page><SelectedText>Test</SelectedText></Page>
            </Sheet>
          </Workspace>
          <StatusBar>
            <Pager>
              <PagerButton aria-label="First page"><PagerGlyph d="M2 2V22M15 2L4 12l11 10" /></PagerButton>
              <PagerButton aria-label="Previous page"><PagerGlyph d="M14 2L4 12l10 10" /></PagerButton>
              <PageBox aria-label="Page" defaultValue="1 of 1" />
              <PagerButton aria-label="Next page"><PagerGlyph d="M4 2l10 10L4 22" /></PagerButton>
              <PagerButton aria-label="Last page"><PagerGlyph d="M16 2V22M3 2l11 10L3 22" /></PagerButton>
            </Pager>
            <ZoomArea>
              <SelectShell $width={150} $raised>
                <PlainSelect aria-label="Zoom level" defaultValue="100%"><option>100%</option></PlainSelect>
                <PinkKnob><Chevron color="#fff" /></PinkKnob>
              </SelectShell>
              <Spacer $width={9} />
              <ZoomButton aria-label="Zoom out">
                <svg width="22" height="22" fill="none" stroke={INK} strokeWidth="2.500"><path d="M0 11H22" /></svg>
              </ZoomButton>
              <ZoomSlider type="range" aria-label="Zoom" min={0} max={100} defaultValue={47} />
              <ZoomButton aria-label="Zoom in">
                <svg width="22" height="22" fill="none" stroke={INK} strokeWidth="2.500"><path d="M0 11H22M11 0V22" /></svg>
              </ZoomButton>
            </ZoomArea>
          </StatusBar>
        </AppWindow>
      </Desktop>
    </>
  );
}
